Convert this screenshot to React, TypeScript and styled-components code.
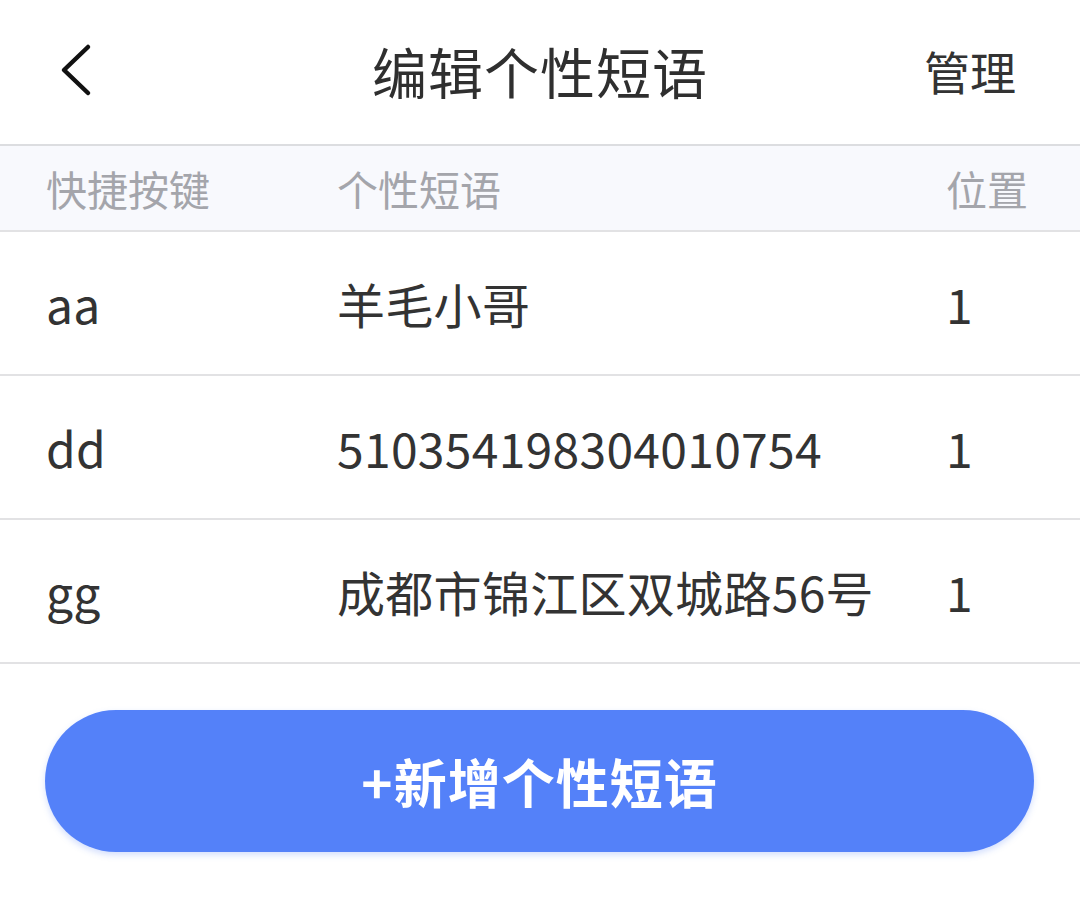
import React from "react";
import styled, { createGlobalStyle } from "styled-components";

const GlobalStyle = createGlobalStyle`
  html, body {
    margin: 0;
    padding: 0;
    background: #ffffff;
  }
  body {
    font-family: "Noto Sans CJK SC", "Noto Sans", sans-serif;
    color: #333333;
  }
`;

const Page = styled.div`
  width: 1080px;
  min-height: 911px;
  background: #ffffff;
  display: flex;
  flex-direction: column;
`;

const NavBar = styled.header`
  height: 144px;
  border-bottom: 2px solid #dcdde0;
  display: grid;
  grid-template-columns: 200px 1fr 200px;
  align-items: center;
  padding-bottom: 4px;
  box-sizing: border-box;
  height: 146px;
`;

const BackButton = styled.button`
  border: none;
  background: none;
  padding: 0 0 0 56px;
  height: 100%;
  display: flex;
  align-items: center;
  justify-self: start;
  cursor: pointer;
`;

const Title = styled.h1`
  margin: 0;
  text-align: center;
  font-size: 55px;
  font-weight: 400;
  color: #2f2f2f;
  letter-spacing: 1px;
`;

const Manage = styled.button`
  justify-self: end;
  border: none;
  background: none;
  padding: 0 64px 0 0;
  font-family: inherit;
  font-size: 46px;
  color: #333333;
  cursor: pointer;
`;

const Row = styled.div<{ $head?: boolean }>`
  display: grid;
  grid-template-columns: 291px 609px 1fr;
  align-items: center;
  padding-left: 46px;
  height: ${(p) => (p.$head ? "84px" : "142px")};
  background: ${(p) => (p.$head ? "#f8f9fd" : "#ffffff")};
  border-bottom: 2px solid #e2e2e4;
`;

const Cell = styled.span<{ $head?: boolean }>`
  font-size: ${(p) => (p.$head ? "41px" : "48px")};
  color: ${(p) => (p.$head ? "#a4a5ab" : "#333333")};
  white-space: nowrap;
  letter-spacing: ${(p) => (p.$head ? "0" : "0.3px")};
`;

const AddButton = styled.button`
  margin: 46px 46px 0 45px;
  height: 142px;
  border: none;
  border-radius: 71px;
  background: #5481f9;
  box-shadow: 0 3px 6px rgba(84, 129, 249, 0.25);
  color: #ffffff;
  font-family: inherit;
  font-size: 53px;
  font-weight: 700;
  letter-spacing: 1px;
  cursor: pointer;
`;

const rows = [
  { key: "aa", text: "羊毛小哥", pos: "1" },
  { key: "dd", text: "510354198304010754", pos: "1" },
  { key: "gg", text: "成都市锦江区双城路56号", pos: "1" },
];

export default function App() {
  return (
    <Page>
      <GlobalStyle />
      <NavBar>
        <BackButton aria-label="返回">
          <svg width="40" height="56" viewBox="0 0 40 56">
            <polyline
              points="32,5 8,28 32,51"
              fill="none"
              stroke="#111111"
              strokeWidth="4.5"
              strokeLinecap="round"
              strokeLinejoin="round"
            />
          </svg>
        </BackButton>
        <Title>编辑个性短语</Title>
        <Manage>管理</Manage>
      </NavBar>
      <Row $head>
        <Cell $head>快捷按键</Cell>
        <Cell $head>个性短语</Cell>
        <Cell $head>位置</Cell>
      </Row>
      {rows.map((r) => (
        <Row key={r.key}>
          <Cell>{r.key}</Cell>
          <Cell>{r.text}</Cell>
          <Cell>{r.pos}</Cell>
        </Row>
      ))}
      <AddButton>+新增个性短语</AddButton>
    </Page>
  );
}
